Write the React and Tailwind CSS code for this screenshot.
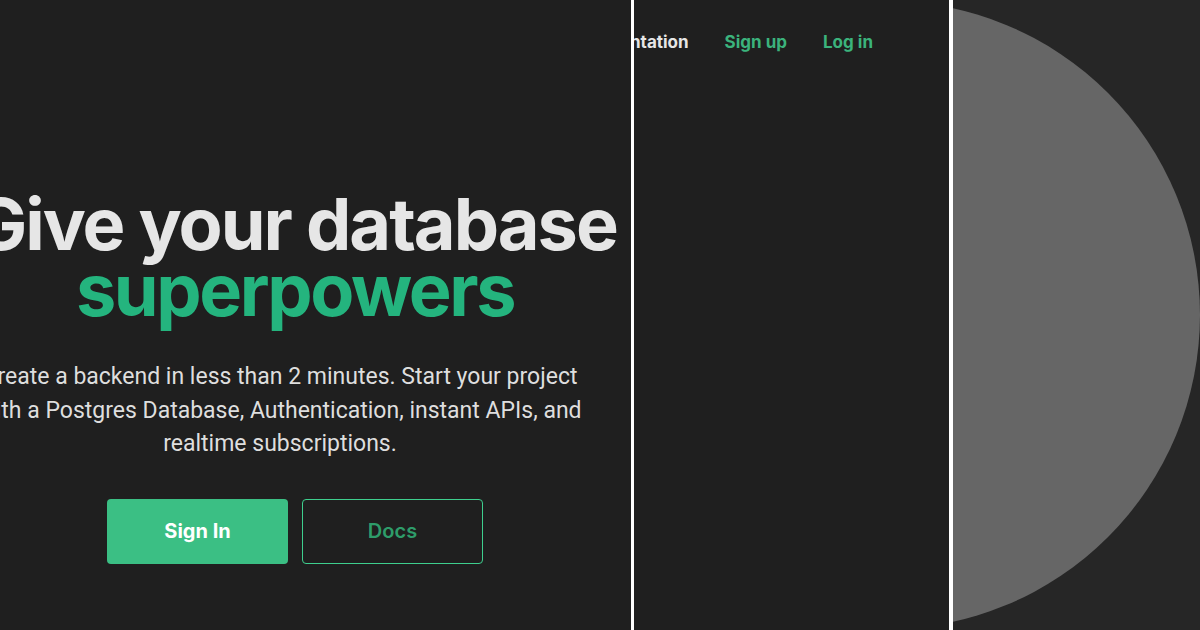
function Hero() {
  return (
    <div className="flex w-[700px] shrink-0 -ml-[55px] flex-col items-center pt-[191px]">
      <h1 className="text-center text-[72px] font-bold leading-[66px] tracking-[-2px] text-[#e6e6e6]">
        Give your database
        <br />
        <span className="tracking-[-2.4px] text-[#24b47e]">superpowers</span>
      </h1>
      <p className="mt-[37px] ml-[23px] w-[624px] self-start text-center text-[23px] leading-[33.5px] text-[#dedede] [font-family:Roboto,sans-serif]">
        Create a backend in less than 2 minutes. Start your project with a
        Postgres Database, Authentication, instant APIs, and realtime
        subscriptions.
      </p>
      <div className="mt-[38px] flex gap-[14px]">
        <button className="h-[65px] w-[181px] rounded-[4px] bg-[#3bbf84] text-[20px] font-bold text-white">
          Sign In
        </button>
        <button className="h-[65px] w-[181px] rounded-[4px] border border-[#3ecf8e] text-[20px] font-semibold text-[#2e9c6a]">
          Docs
        </button>
      </div>
    </div>
  );
}

function Nav() {
  return (
    <nav className="flex justify-end gap-[36px] pr-[76px] pt-[31px] text-[17px] font-bold leading-[22px]">
      <a className="shrink-0 text-[#e6e6e6]">Documentation</a>
      <a className="shrink-0 text-[#3bb37c]">Sign up</a>
      <a className="shrink-0 text-[#3bb37c]">Log in</a>
    </nav>
  );
}

export default function App() {
  return (
    <div className="flex h-[630px] w-[1200px] overflow-hidden bg-white [font-family:Inter,'Noto_Sans',sans-serif]">
      <section className="flex w-[631px] shrink-0 overflow-hidden bg-[#1f1f1f]">
        <Hero />
      </section>
      <div className="w-[3px] shrink-0 bg-white" />
      <section className="w-[315px] shrink-0 overflow-hidden bg-[#1f1f1f]">
        <Nav />
      </section>
      <div className="w-[4px] shrink-0 bg-white" />
      <section className="relative flex-1 overflow-hidden bg-[#262626]">
        <div className="absolute left-[-381px] top-[1px] h-[628px] w-[628px] rounded-full bg-[#666666]" />
      </section>
    </div>
  );
}
